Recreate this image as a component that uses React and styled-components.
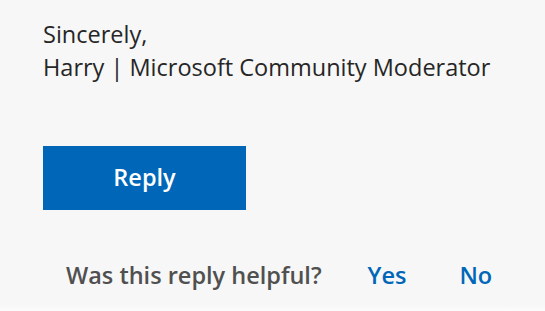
import React from "react";
import styled, { createGlobalStyle } from "styled-components";

const GlobalStyle = createGlobalStyle`
  html, body {
    margin: 0;
    padding: 0;
    background: #f7f7f7;
  }
  body {
    font-family: "Open Sans", "Noto Sans", sans-serif;
  }
`;

const Page = styled.div`
  height: 311px;
  display: flex;
  flex-direction: column;
  background: #f7f7f7;
  box-sizing: border-box;
  padding: 18px 0 0 42px;
  position: relative;
`;

const Signature = styled.div`
  color: #262626;
  font-size: 23.5px;
  line-height: 33px;
  margin-left: 1px;
`;

const Button = styled.button`
  display: flex;
  align-items: center;
  justify-content: center;
  width: 203px;
  height: 64px;
  margin: 62px 0 0 1px;
  padding: 0 0 3px;
  border: 0;
  border-radius: 0;
  background: #0067b8;
  color: #ffffff;
  font-family: "Open Sans", "Noto Sans", sans-serif;
  font-size: 23.5px;
  font-weight: 600;
  cursor: pointer;
`;

const Feedback = styled.div`
  display: flex;
  align-items: baseline;
  margin: 49px 0 0 24px;
  font-size: 23.5px;
  line-height: 33px;
  font-weight: 600;
`;

const Question = styled.span`
  color: #505050;
  margin-right: ${(p) => p.gap}px;
`;

const Answer = styled.a`
  color: #0067b8;
  text-decoration: none;
  margin-left: ${(p) => p.gap || 0}px;
  cursor: pointer;
`;

const Bottom = styled.div`
  position: absolute;
  left: 0;
  right: 0;
  bottom: 0;
  height: 6px;
  background: linear-gradient(#f7f7f7, #fcfcfc);
`;

export default function App() {
  return (
    <Page>
      <GlobalStyle />
      <Signature>
        Sincerely,
        <br />
        Harry | Microsoft Community Moderator
      </Signature>
      <Button>Reply</Button>
      <Feedback>
        <Question gap={46}>Was this reply helpful?</Question>
        <Answer>Yes</Answer>
        <Answer gap={53}>No</Answer>
      </Feedback>
      <Bottom />
    </Page>
  );
}
